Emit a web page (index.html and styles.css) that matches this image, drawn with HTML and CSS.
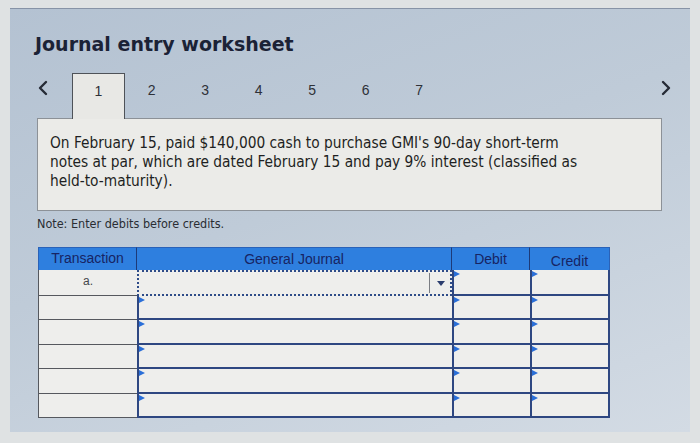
FILE: index.html
```html
<!DOCTYPE html>
<html>
<head>
<meta charset="utf-8">
<link rel="stylesheet" href="styles.css">
</head>
<body>
<div class="panel">
  <h1 class="title">Journal entry worksheet</h1>
  <div class="tabs">
    <span class="chev prev"><svg width="12" height="16" viewBox="0 0 12 16"><path d="M9 2 L3 8 L9 14" fill="none" stroke="#262b36" stroke-width="2.4" stroke-linecap="round" stroke-linejoin="round"/></svg></span>
    <span class="tab active">1</span>
    <span class="tab">2</span>
    <span class="tab">3</span>
    <span class="tab">4</span>
    <span class="tab">5</span>
    <span class="tab">6</span>
    <span class="tab">7</span>
    <span class="spacer"></span>
    <span class="chev next"><svg width="12" height="16" viewBox="0 0 12 16"><path d="M3 2 L9 8 L3 14" fill="none" stroke="#262b36" stroke-width="2.4" stroke-linecap="round" stroke-linejoin="round"/></svg></span>
  </div>
  <div class="question">
    <p>On February 15, paid $140,000 cash to purchase GMI's 90-day short-term notes at par, which are dated February 15 and pay 9% interest (classified as held-to-maturity).</p>
  </div>
  <p class="note">Note: Enter debits before credits.</p>
  <div class="journal">
    <div class="th">Transaction</div>
    <div class="th">General Journal</div>
    <div class="th">Debit</div>
    <div class="th last">Credit</div>

    <div class="tc">a.</div>
    <div class="gj focus"><span class="sel"></span><span class="arrow"></span></div>
    <div class="amt mark"></div>
    <div class="amt mark last"></div>

    <div class="tc"></div>
    <div class="gj mark"></div>
    <div class="amt mark"></div>
    <div class="amt mark last"></div>

    <div class="tc"></div>
    <div class="gj mark"></div>
    <div class="amt mark"></div>
    <div class="amt mark last"></div>

    <div class="tc"></div>
    <div class="gj mark"></div>
    <div class="amt mark"></div>
    <div class="amt mark last"></div>

    <div class="tc"></div>
    <div class="gj mark"></div>
    <div class="amt mark"></div>
    <div class="amt mark last"></div>

    <div class="tc"></div>
    <div class="gj mark"></div>
    <div class="amt mark"></div>
    <div class="amt mark last"></div>
  </div>
</div>
</body>
</html>
```

FILE: styles.css
```css
html, body {
  margin: 0;
  padding: 0;
}
body {
  width: 700px;
  height: 443px;
  background: #dfe2e3;
  overflow: hidden;
  padding-top: 8px;
  padding-left: 10px;
  box-sizing: border-box;
}
.panel {
  width: 680px;
  height: 424px;
  box-sizing: border-box;
  padding: 23px 0 0 27px;
  background: linear-gradient(160deg, #b4c2d2 0%, #bfcbd8 45%, #d3dbe4 100%);
  border-top: 1px solid #8793a6;
}
.title {
  margin: 0 0 17px -2px;
  font-family: "DejaVu Sans", sans-serif;
  font-weight: bold;
  font-size: 19px;
  line-height: 24px;
  color: #1b2236;
}
.tabs {
  display: flex;
  align-items: stretch;
  height: 45px;
  width: 635px;
  font-family: "Liberation Sans", Arial, sans-serif;
  font-size: 14px;
  color: #2e3138;
}
.chev {
  padding-top: 7px;
  height: 16px;
}
.chev.prev {
  width: 35px;
}
.tab {
  width: 53.5px;
  box-sizing: border-box;
  text-align: center;
  padding-top: 8px;
  line-height: 18px;
}
.tab.active {
  background: #e8e8e5;
  border: 1px solid #4e5258;
  border-bottom: none;
  margin-bottom: -1px;
  position: relative;
  z-index: 1;
  width: 53px;
}
.spacer {
  flex: 1;
}
.question {
  width: 625px;
  height: 93px;
  box-sizing: border-box;
  background: #ebebe8;
  border: 1px solid #8c9197;
  padding: 15px 12px 0 12px;
}
.question p {
  margin: 0;
  width: 550px;
  font-family: "DejaVu Sans Condensed", "DejaVu Sans", sans-serif;
  font-stretch: condensed;
  font-size: 15.3px;
  line-height: 19px;
  color: #1e1f22;
}
.note {
  margin: 5px 0 0 0;
  font-family: "DejaVu Sans Condensed", "DejaVu Sans", sans-serif;
  font-stretch: condensed;
  font-size: 12.5px;
  line-height: 15px;
  color: #2a2d33;
}
.journal {
  margin: 16px 0 0 1px;
  display: grid;
  grid-template-columns: 99px 315px 78px 80px;
  grid-template-rows: 23px 26px repeat(5, 24.4px);
  width: 572px;
  font-family: "Liberation Sans", Arial, sans-serif;
}
.th {
  background: #2e7fdf;
  color: #172463;
  font-size: 14px;
  text-align: center;
  line-height: 23px;
  border-right: 1px solid #1d3a78;
  border-top: 1px solid #2a62b8;
}
.th:first-child {
  border-left: 1px solid #2a62b8;
  line-height: 21px;
}
.th.last {
  border-right: 1px solid #2a62b8;
  line-height: 26px;
}
.tc {
  background: #eeeeec;
  border-left: 1px solid #55585e;
  border-bottom: 1px solid #55585e;
  text-align: center;
  font-size: 12px;
  color: #45474c;
  line-height: 22px;
}
.gj, .amt {
  background: #eeeeec;
  border-left: 2px solid #2e4781;
  border-bottom: 2px solid #2e4781;
  position: relative;
}
.amt.last {
  border-right: 2px solid #2e4781;
}
.gj.focus {
  border: 2px dotted #2d4b88;
  display: flex;
  justify-content: flex-end;
  align-items: center;
}
.sel {
  align-self: stretch;
  width: 0;
  border-left: 1px solid #7a7d83;
  margin: 1px 0;
}
.arrow {
  width: 0;
  height: 0;
  border-left: 4.5px solid transparent;
  border-right: 4.5px solid transparent;
  border-top: 5px solid #2b3d6e;
  margin: 0 5px 0 7px;
}
.mark::before {
  content: "";
  position: absolute;
  left: 0;
  top: 1px;
  width: 0;
  height: 0;
  border-left: 6px solid #2a6fd8;
  border-top: 3.5px solid transparent;
  border-bottom: 3.5px solid transparent;
}
```
